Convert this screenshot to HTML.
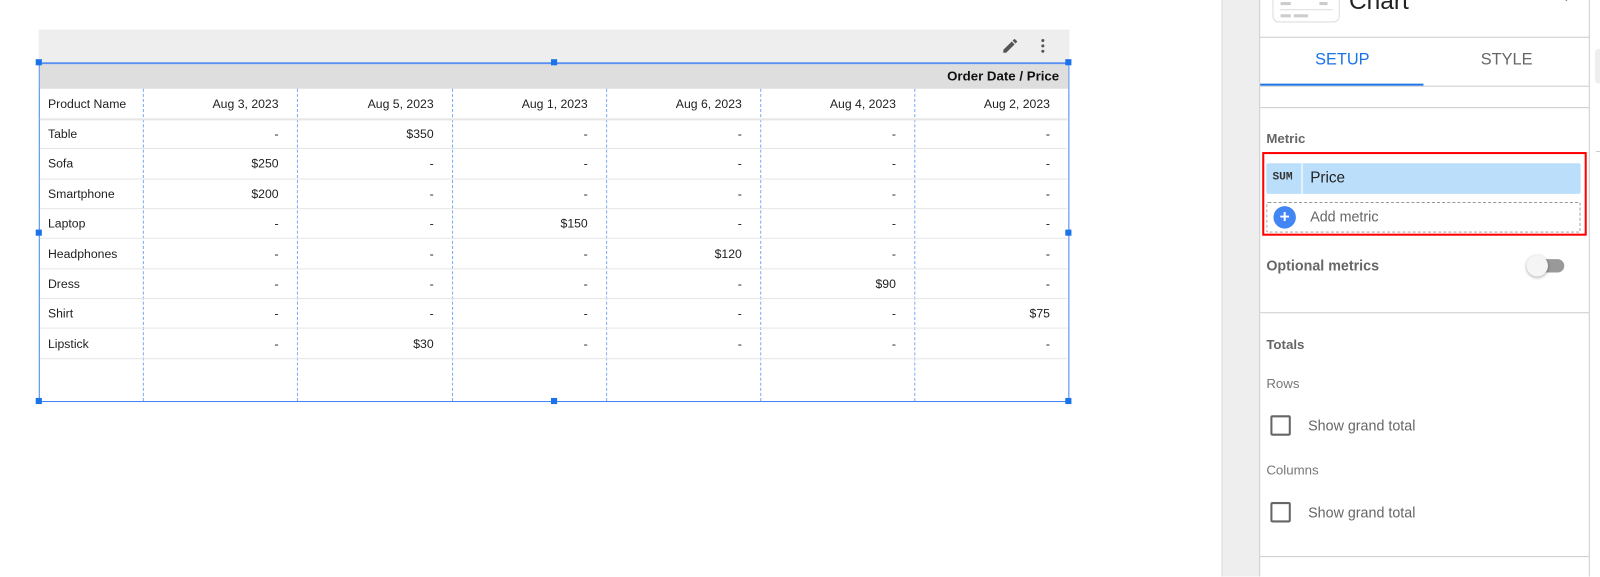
<!DOCTYPE html>
<html><head><style>
*{box-sizing:border-box;margin:0;padding:0}
body{width:1600px;height:565px;background:#fff;font-family:"Liberation Sans",Arial,sans-serif;position:relative;overflow:hidden;color:#202124}
#w{position:absolute;left:0;top:0;width:1568px;height:554px;transform:scale(1.0204);transform-origin:0 0}
.a{position:absolute}
.t{font-size:12px;color:#222}
.h{width:6px;height:6px;background:#1a73e8;position:absolute}
.vl{position:absolute;top:87px;height:306px;border-left:1px dashed #7baaf7}
.hl{position:absolute;left:39px;width:1007px;height:1px;background:#e6e6e6}
.r{position:absolute;text-align:right;font-size:12px;color:#222}
</style></head><body><div id="w">
<div class="a" style="left:38px;top:29px;width:1010px;height:32px;background:#eeeeee"></div>
<svg class="a" style="left:981px;top:36px" width="18" height="18" viewBox="0 0 24 24"><path fill="#555" d="M3 17.25V21h3.75L17.81 9.94l-3.75-3.75L3 17.25zM20.71 7.04a1 1 0 0 0 0-1.41l-2.34-2.34a1 1 0 0 0-1.41 0l-1.83 1.83 3.75 3.75 1.83-1.83z"/></svg>
<svg class="a" style="left:1013px;top:36px" width="18" height="18" viewBox="0 0 24 24"><circle cx="12" cy="5" r="2" fill="#555"/><circle cx="12" cy="12" r="2" fill="#555"/><circle cx="12" cy="19" r="2" fill="#555"/></svg>
<div class="a" style="left:38px;top:61px;width:1010px;height:333px;border:1px solid #4285f4;border-top:2px solid #5b8ff0"></div>
<div class="a" style="left:39px;top:63px;width:1008px;height:24px;background:#dedede"></div>
<div class="a" style="right:530px;top:67px;font-size:13px;font-weight:bold;color:#111">Order Date / Price</div>
<div class="h" style="left:35px;top:58px"></div><div class="h" style="left:540px;top:58px"></div><div class="h" style="left:1044px;top:58px"></div>
<div class="h" style="left:35px;top:225px"></div><div class="h" style="left:1044px;top:225px"></div>
<div class="h" style="left:35px;top:390px"></div><div class="h" style="left:540px;top:390px"></div><div class="h" style="left:1044px;top:390px"></div>
<div class="vl" style="left:140px"></div><div class="vl" style="left:291px"></div><div class="vl" style="left:443px"></div><div class="vl" style="left:594px"></div><div class="vl" style="left:745px"></div><div class="vl" style="left:896px"></div>
<div class="hl" style="top:116px;height:2px"></div><div class="hl" style="top:145px"></div><div class="hl" style="top:175px"></div><div class="hl" style="top:204px"></div><div class="hl" style="top:233px"></div><div class="hl" style="top:263px"></div><div class="hl" style="top:292px"></div><div class="hl" style="top:321px"></div><div class="hl" style="top:351px"></div>
<div id="tbl"></div>
<script>
var cols=[140,291,443,594,745,896,1047];
var hdr=["Aug 3, 2023","Aug 5, 2023","Aug 1, 2023","Aug 6, 2023","Aug 4, 2023","Aug 2, 2023"];
var rows=[["Table",1,"$350"],["Sofa",0,"$250"],["Smartphone",0,"$200"],["Laptop",2,"$150"],["Headphones",3,"$120"],["Dress",4,"$90"],["Shirt",5,"$75"],["Lipstick",1,"$30"]];
var h='<div class="a t" style="left:47px;top:95px">Product Name</div>';
for(var i=0;i<6;i++)h+='<div class="r" style="left:'+cols[i]+'px;width:'+(cols[i+1]-cols[i]-18)+'px;top:95px">'+hdr[i]+'</div>';
for(var r=0;r<8;r++){var y=124+r*29.4;h+='<div class="a t" style="left:47px;top:'+y+'px">'+rows[r][0]+'</div>';
for(var i=0;i<6;i++)h+='<div class="r" style="left:'+cols[i]+'px;width:'+(cols[i+1]-cols[i]-18)+'px;top:'+y+'px">'+(i==rows[r][1]?rows[r][2]:'-')+'</div>';}
document.getElementById('tbl').innerHTML=h;
</script>
<div class="a" style="left:1197px;top:0;width:37px;height:565px;background:#eeeeee;border-left:1px solid #ddd"></div>
<div class="a" style="left:1234px;top:0;width:324px;height:565px;border-left:1px solid #ccc;border-right:1px solid #ccc;background:#fff"></div>
<div class="a" style="left:1563px;top:48px;width:8px;height:34px;background:#eee;border-radius:4px"></div>
<div class="a" style="left:1564px;top:148px;width:8px;height:1px;background:#ccc"></div>
<div class="a" style="left:1247px;top:-8px;width:66px;height:30px;border:1px solid #ddd;border-radius:6px"></div>
<div class="a" style="left:1255px;top:2px;width:10px;height:3px;background:#ccc"></div><div class="a" style="left:1293px;top:2px;width:8px;height:3px;background:#ccc"></div>
<div class="a" style="left:1254px;top:9px;width:52px;height:1px;background:#ddd"></div>
<div class="a" style="left:1255px;top:14px;width:10px;height:3px;background:#ccc"></div><div class="a" style="left:1268px;top:14px;width:14px;height:3px;background:#ccc"></div>
<div class="a" style="left:1322px;top:-12px;font-size:24px;color:#222">Chart</div>
<div class="a" style="left:1530px;top:-4px;width:0;height:0;border-left:5px solid transparent;border-right:5px solid transparent;border-top:5px solid #555"></div>
<div class="a" style="left:1235px;top:36px;width:322px;height:1px;background:#ccc"></div>
<div class="a" style="left:1235px;top:50px;width:161px;text-align:center;font-size:16px;color:#1a73e8">SETUP</div>
<div class="a" style="left:1396px;top:50px;width:161px;text-align:center;font-size:16px;color:#666">STYLE</div>
<div class="a" style="left:1235px;top:82px;width:160px;height:2px;background:#1a73e8"></div>
<div class="a" style="left:1235px;top:84px;width:322px;height:1px;background:#ccc"></div>
<div class="a" style="left:1235px;top:105px;width:322px;height:1px;background:#ccc"></div>
<div class="a" style="left:1237px;top:149px;width:318px;height:82px;border:2px solid #f00"></div>
<div class="a" style="left:1241px;top:128px;font-size:13px;font-weight:bold;color:#666">Metric</div>
<div class="a" style="left:1241px;top:160px;width:308px;height:30px;background:#bbdefb;border-radius:2px"></div>
<div class="a" style="left:1275px;top:160px;width:2px;height:30px;background:#e3f2fd"></div>
<div class="a" style="left:1247px;top:168px;font-size:11px;font-weight:bold;color:#333;font-family:'Liberation Mono',monospace">SUM</div>
<div class="a" style="left:1284px;top:166px;font-size:15px;color:#222">Price</div>
<div class="a" style="left:1241px;top:198px;width:308px;height:30px;border:1px dashed #999;border-radius:2px"></div>
<div class="a" style="left:1248px;top:202px;width:22px;height:22px;border-radius:50%;background:#4285f4;color:#fff;font-size:17px;line-height:21px;text-align:center;font-weight:bold">+</div>
<div class="a" style="left:1284px;top:204px;font-size:14px;color:#666">Add metric</div>
<div class="a" style="left:1241px;top:252px;font-size:14px;font-weight:bold;color:#666">Optional metrics</div>
<div class="a" style="left:1503px;top:254px;width:30px;height:13px;border-radius:7px;background:#999"></div>
<div class="a" style="left:1496px;top:250px;width:21px;height:21px;border-radius:50%;background:#f5f5f5;box-shadow:0 1px 3px rgba(0,0,0,.35)"></div>
<div class="a" style="left:1235px;top:306px;width:322px;height:1px;background:#ccc"></div>
<div class="a" style="left:1241px;top:330px;font-size:13px;font-weight:bold;color:#666">Totals</div>
<div class="a" style="left:1241px;top:368px;font-size:13px;color:#777">Rows</div>
<div class="a" style="left:1245px;top:407px;width:20px;height:20px;border:2px solid #666;border-radius:2px"></div>
<div class="a" style="left:1282px;top:409px;font-size:14px;color:#666">Show grand total</div>
<div class="a" style="left:1241px;top:453px;font-size:13px;color:#777">Columns</div>
<div class="a" style="left:1245px;top:492px;width:20px;height:20px;border:2px solid #666;border-radius:2px"></div>
<div class="a" style="left:1282px;top:494px;font-size:14px;color:#666">Show grand total</div>
<div class="a" style="left:1235px;top:545px;width:322px;height:1px;background:#ccc"></div>
</div></body></html>
